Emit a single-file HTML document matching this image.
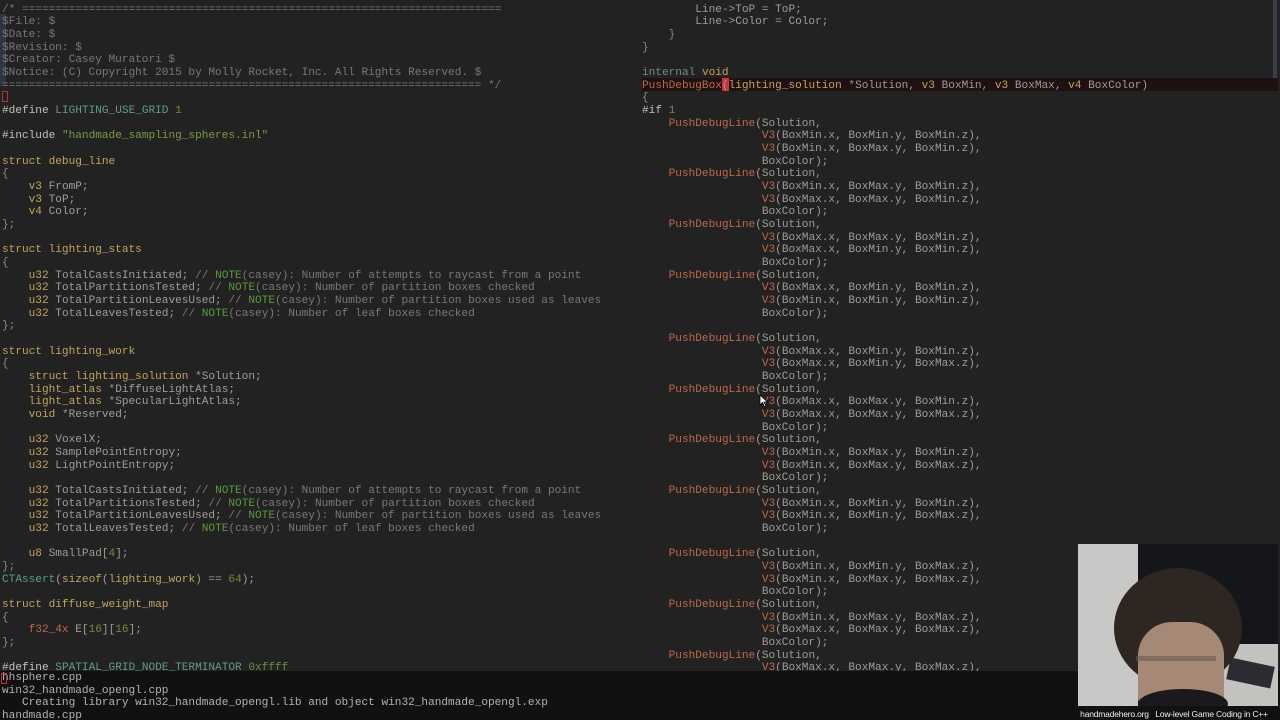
<!DOCTYPE html>
<html><head><meta charset="utf-8"><style>
html,body{margin:0;padding:0;background:#222;width:1280px;height:720px;overflow:hidden;position:relative}
pre{margin:0;font-family:"Liberation Mono",monospace;font-size:11.1px;line-height:12.67px;color:#a09d96;position:absolute;white-space:pre}
#L{left:2px;top:3.5px}
#R{left:642px;top:3.5px}
.k{color:#c4a45c}.c{color:#7a7874}.n{color:#5a9a3c}.f{color:#be684c}.p{color:#c4c2bc}.m{color:#5e9a92}.s{color:#7b9a44}.d{color:#6f8f3c}.i{color:#748a8a}.b{color:#8a8a86}
#bot{position:absolute;left:0;top:671px;width:1280px;height:49px;background:#111}
#B{left:2px;top:672px;color:#b4b2ac}
</style></head><body>
<div style="position:absolute;left:0;top:14px;width:6px;height:72px;background:#2e3444"></div>
<div style="position:absolute;left:642px;top:78px;width:636px;height:13px;background:#1f1011"></div>
<div style="position:absolute;left:1273px;top:0;width:4px;height:78px;background:#3b3d4a"></div>
<div style="position:absolute;left:2px;top:91px;width:6px;height:11px;border:1px solid #b03040;box-sizing:border-box"></div>
<div style="position:absolute;left:722px;top:78px;width:7px;height:13px;background:#d03040"></div>
<pre id="L"><span class="c">/* ========================================================================
$File: $
$Date: $
$Revision: $
$Creator: Casey Muratori $
$Notice: (C) Copyright 2015 by Molly Rocket, Inc. All Rights Reserved. $
======================================================================== */</span>

<span class="p">#define</span> <span class="m">LIGHTING_USE_GRID</span> <span class="d">1</span>

<span class="p">#include</span> <span class="s">"handmade_sampling_spheres.inl"</span>

<span class="k">struct debug_line</span>
<span class="b">{</span>
    <span class="k">v3</span> FromP;
    <span class="k">v3</span> ToP;
    <span class="k">v4</span> Color;
<span class="b">};</span>

<span class="k">struct lighting_stats</span>
<span class="b">{</span>
    <span class="k">u32</span> TotalCastsInitiated; <span class="c">// </span><span class="n">NOTE</span><span class="c">(casey): Number of attempts to raycast from a point</span>
    <span class="k">u32</span> TotalPartitionsTested; <span class="c">// </span><span class="n">NOTE</span><span class="c">(casey): Number of partition boxes checked</span>
    <span class="k">u32</span> TotalPartitionLeavesUsed; <span class="c">// </span><span class="n">NOTE</span><span class="c">(casey): Number of partition boxes used as leaves</span>
    <span class="k">u32</span> TotalLeavesTested; <span class="c">// </span><span class="n">NOTE</span><span class="c">(casey): Number of leaf boxes checked</span>
<span class="b">};</span>

<span class="k">struct lighting_work</span>
<span class="b">{</span>
    <span class="k">struct lighting_solution</span> *Solution;
    <span class="k">light_atlas</span> *DiffuseLightAtlas;
    <span class="k">light_atlas</span> *SpecularLightAtlas;
    <span class="k">void</span> *Reserved;

    <span class="k">u32</span> VoxelX;
    <span class="k">u32</span> SamplePointEntropy;
    <span class="k">u32</span> LightPointEntropy;

    <span class="k">u32</span> TotalCastsInitiated; <span class="c">// </span><span class="n">NOTE</span><span class="c">(casey): Number of attempts to raycast from a point</span>
    <span class="k">u32</span> TotalPartitionsTested; <span class="c">// </span><span class="n">NOTE</span><span class="c">(casey): Number of partition boxes checked</span>
    <span class="k">u32</span> TotalPartitionLeavesUsed; <span class="c">// </span><span class="n">NOTE</span><span class="c">(casey): Number of partition boxes used as leaves</span>
    <span class="k">u32</span> TotalLeavesTested; <span class="c">// </span><span class="n">NOTE</span><span class="c">(casey): Number of leaf boxes checked</span>

    <span class="k">u8</span> SmallPad[<span class="d">4</span>];
<span class="b">};</span>
<span class="m">CTAssert</span>(<span class="k">sizeof</span>(<span class="k">lighting_work</span>) == <span class="d">64</span>);

<span class="k">struct diffuse_weight_map</span>
<span class="b">{</span>
    <span class="f">f32_4x</span> E[<span class="d">16</span>][<span class="d">16</span>];
<span class="b">};</span>

<span class="p">#define</span> <span class="m">SPATIAL_GRID_NODE_TERMINATOR</span> <span class="d">0xffff</span></pre>
<pre id="R">        Line-&gt;ToP = ToP;
        Line-&gt;Color = Color;
    <span class="b">}</span>
<span class="b">}</span>

<span class="i">internal</span> <span class="k">void</span>
<span class="f">PushDebugBox</span>(<span class="k">lighting_solution</span> *Solution, <span class="k">v3</span> BoxMin, <span class="k">v3</span> BoxMax, <span class="k">v4</span> BoxColor)
<span class="b">{</span>
<span class="p">#if</span> <span class="d">1</span>
    <span class="f">PushDebugLine</span>(Solution,
                  <span class="f">V3</span>(BoxMin.x, BoxMin.y, BoxMin.z),
                  <span class="f">V3</span>(BoxMin.x, BoxMax.y, BoxMin.z),
                  BoxColor);
    <span class="f">PushDebugLine</span>(Solution,
                  <span class="f">V3</span>(BoxMin.x, BoxMax.y, BoxMin.z),
                  <span class="f">V3</span>(BoxMax.x, BoxMax.y, BoxMin.z),
                  BoxColor);
    <span class="f">PushDebugLine</span>(Solution,
                  <span class="f">V3</span>(BoxMax.x, BoxMax.y, BoxMin.z),
                  <span class="f">V3</span>(BoxMax.x, BoxMin.y, BoxMin.z),
                  BoxColor);
    <span class="f">PushDebugLine</span>(Solution,
                  <span class="f">V3</span>(BoxMax.x, BoxMin.y, BoxMin.z),
                  <span class="f">V3</span>(BoxMin.x, BoxMin.y, BoxMin.z),
                  BoxColor);

    <span class="f">PushDebugLine</span>(Solution,
                  <span class="f">V3</span>(BoxMax.x, BoxMin.y, BoxMin.z),
                  <span class="f">V3</span>(BoxMax.x, BoxMin.y, BoxMax.z),
                  BoxColor);
    <span class="f">PushDebugLine</span>(Solution,
                  <span class="f">V3</span>(BoxMax.x, BoxMax.y, BoxMin.z),
                  <span class="f">V3</span>(BoxMax.x, BoxMax.y, BoxMax.z),
                  BoxColor);
    <span class="f">PushDebugLine</span>(Solution,
                  <span class="f">V3</span>(BoxMin.x, BoxMax.y, BoxMin.z),
                  <span class="f">V3</span>(BoxMin.x, BoxMax.y, BoxMax.z),
                  BoxColor);
    <span class="f">PushDebugLine</span>(Solution,
                  <span class="f">V3</span>(BoxMin.x, BoxMin.y, BoxMin.z),
                  <span class="f">V3</span>(BoxMin.x, BoxMin.y, BoxMax.z),
                  BoxColor);

    <span class="f">PushDebugLine</span>(Solution,
                  <span class="f">V3</span>(BoxMin.x, BoxMin.y, BoxMax.z),
                  <span class="f">V3</span>(BoxMin.x, BoxMax.y, BoxMax.z),
                  BoxColor);
    <span class="f">PushDebugLine</span>(Solution,
                  <span class="f">V3</span>(BoxMin.x, BoxMax.y, BoxMax.z),
                  <span class="f">V3</span>(BoxMax.x, BoxMax.y, BoxMax.z),
                  BoxColor);
    <span class="f">PushDebugLine</span>(Solution,
                  <span class="f">V3</span>(BoxMax.x, BoxMax.y, BoxMax.z),</pre>
<div id="bot"></div>
<pre id="B">hhsphere.cpp
win32_handmade_opengl.cpp
   Creating library win32_handmade_opengl.lib and object win32_handmade_opengl.exp
handmade.cpp</pre>
<div style="position:absolute;left:1px;top:673px;width:6px;height:11px;border:1px solid #c03040;box-sizing:border-box"></div>
<svg style="position:absolute;left:759px;top:394px" width="10" height="14" viewBox="0 0 10 14"><path d="M1 1 L1 11 L3.5 8.5 L5.5 13 L7 12.3 L5 8 L8.5 8 Z" fill="#fff" stroke="#000" stroke-width="0.8"/></svg>
<div style="position:absolute;left:1078px;top:544px;width:200px;height:162px;background:#111;overflow:hidden">
  <div style="position:absolute;left:0;top:0;width:60px;height:162px;background:#c8c8c6"></div>
  <div style="position:absolute;left:60px;top:0;width:140px;height:162px;background:#15151c"></div>
  <div style="position:absolute;left:140px;top:100px;width:60px;height:62px;background:#c4c2be"></div>
  <div style="position:absolute;left:150px;top:118px;width:45px;height:22px;background:#2a2c32;transform:rotate(12deg)"></div>
  <div style="position:absolute;left:36px;top:24px;width:128px;height:120px;border-radius:50%;background:#2e2620"></div>
  <div style="position:absolute;left:60px;top:78px;width:86px;height:84px;border-radius:40% 40% 10% 10%;background:#a58876"></div>
  <div style="position:absolute;left:58px;top:112px;width:80px;height:5px;background:#6a5a50;opacity:.6"></div>
  <div style="position:absolute;left:60px;top:145px;width:90px;height:30px;border-radius:50%;background:#1a1a1e"></div>
</div>
<div style="position:absolute;left:1078px;top:708px;width:202px;height:12px;font-family:'Liberation Sans',sans-serif;font-size:8.5px;color:#eee;line-height:12px;letter-spacing:-0.2px">&nbsp;handmadehero.org&nbsp;&nbsp; Low-level Game Coding in C++</div>
</body></html>
